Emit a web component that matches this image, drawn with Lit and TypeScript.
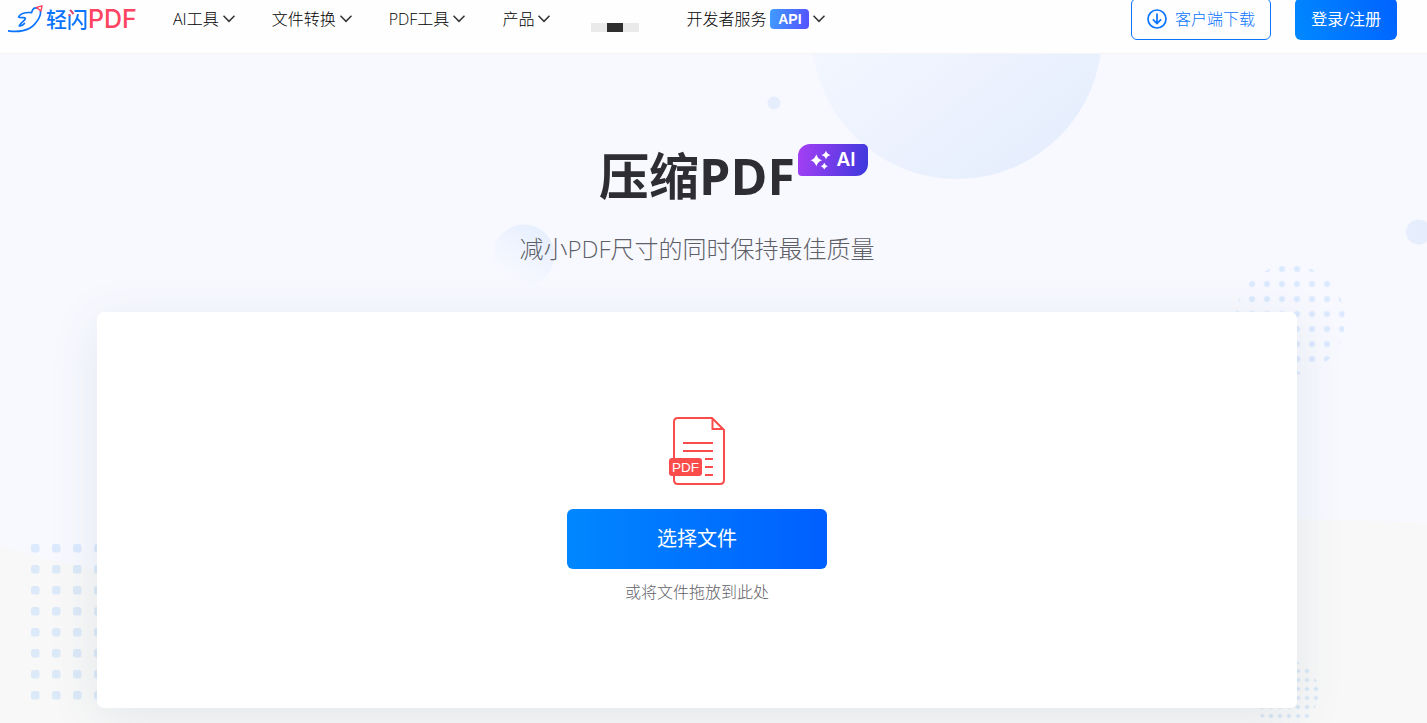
import { LitElement, html, css, svg } from "lit";
import { customElement } from "lit/decorators.js";

interface NavItem {
  label: string;
  badge?: string;
  placeholder?: boolean;
}

const NAV: NavItem[] = [
  { label: "AI工具" },
  { label: "文件转换" },
  { label: "PDF工具" },
  { label: "产品" },
  { label: "", placeholder: true },
  { label: "开发者服务", badge: "API" },
];

const chevron = html`<svg class="chevron" width="12" height="8" viewBox="0 0 12 8" aria-hidden="true">
  <path d="M0.5 0.8 L6 6.4 L11.5 0.8" fill="none" stroke="#333" stroke-width="1.5" />
</svg>`;

@customElement("page-backdrop")
export class PageBackdrop extends LitElement {
  static styles = css`
    :host {
      display: block;
      position: absolute;
      inset: 0;
      overflow: hidden;
    }
    .art {
      display: block;
      width: 100%;
      height: 100%;
    }
  `;

  render() {
    return html`<svg class="art" viewBox="0 0 1427 669" preserveAspectRatio="xMidYMin slice" aria-hidden="true">
      <defs>
        <linearGradient id="big" x1="0.2" y1="0.35" x2="0.7" y2="1">
          <stop offset="0" stop-color="#f4f7ff" />
          <stop offset="1" stop-color="#e6eefd" />
        </linearGradient>
        <linearGradient id="soft" x1="0.8" y1="0.2" x2="0.35" y2="0.9">
          <stop offset="0" stop-color="#e8f0fe" />
          <stop offset="1" stop-color="#f8f9ff" />
        </linearGradient>
        <pattern id="dots" x="1244.5" y="207.5" width="15" height="15" patternUnits="userSpaceOnUse">
          <circle cx="7.5" cy="7.5" r="3.1" fill="#dbe9fe" />
        </pattern>
        <pattern id="tiny" x="1257.5" y="612.5" width="9" height="9" patternUnits="userSpaceOnUse">
          <circle cx="4.5" cy="4.5" r="2.1" fill="#d7e5f8" />
        </pattern>
        <pattern id="squares" x="25" y="484" width="21" height="21" patternUnits="userSpaceOnUse">
          <rect x="6" y="6" width="8.5" height="8.5" rx="2.5" fill="#9cc8fb" fill-opacity="0.3" />
        </pattern>
      </defs>
      ${svg`
        <path d="M0 491 C150 540 330 548 560 520 C850 482 1130 454 1427 469 V669 H0 Z" fill="#f8f8f8" />
        <circle cx="957" cy="-20" r="145" fill="url(#big)" />
        <circle cx="774" cy="49" r="6.5" fill="#e6eefd" />
        <circle cx="1418.5" cy="178" r="12.5" fill="#e6eefd" />
        <circle cx="524" cy="201" r="30.5" fill="url(#soft)" />
        <circle cx="1290" cy="266" r="55" fill="url(#dots)" />
        <circle cx="1285" cy="639" r="33.5" fill="url(#tiny)" />
        <rect x="25" y="484" width="84" height="168" fill="url(#squares)" />
      `}
    </svg>`;
  }
}

@customElement("app-root")
export class AppRoot extends LitElement {
  static styles = css`
    :host {
      display: flex;
      flex-direction: column;
      min-height: 100vh;
      overflow: hidden;
      font-family: "Open Sans", "Noto Sans CJK SC", sans-serif;
      font-size: 16px;
      font-weight: 300;
      line-height: 24px;
      color: #000;
      background: #f8f9ff;
    }
    a {
      color: inherit;
      text-decoration: none;
    }
    button {
      font: inherit;
      cursor: pointer;
      margin: 0;
      border: 0;
      padding: 0;
    }
    .header {
      background: #fefefe;
      border-bottom: 1px solid #f4f4f6;
      padding: 0 30px 15px 8px;
    }
    .bar {
      display: flex;
      align-items: center;
      height: 38px;
    }
    .logo {
      display: flex;
      align-items: center;
      width: 129px;
      margin-right: 36px;
      color: #0a74ff;
      font-size: 21px;
      font-weight: 500;
      white-space: nowrap;
    }
    .bird {
      flex: none;
      margin-right: 2px;
    }
    .flash {
      color: transparent;
      background: linear-gradient(#ff4462, #ff4462) 0 0 / 7px 11px no-repeat, #0a74ff;
      -webkit-background-clip: text;
      background-clip: text;
    }
    .brand {
      font-family: Inter, sans-serif;
      font-size: 25px;
      font-weight: 500;
      color: #ff4462;
    }
    .nav {
      display: flex;
      align-items: center;
      gap: 37px;
      flex: 1;
    }
    .item {
      display: flex;
      align-items: center;
      gap: 4px;
      background: none;
      color: inherit;
      white-space: nowrap;
    }
    .chevron {
      flex: none;
    }
    .pixels {
      display: flex;
      padding: 16px 10px 0 4px;
    }
    .pixel {
      width: 16px;
      height: 9px;
      background: #eaeaea;
    }
    .pixel.dark {
      background: #2e2e2e;
    }
    .api {
      width: 39px;
      border-radius: 4px;
      background: linear-gradient(100deg, #3f9dff, #5450ff);
      color: #fff;
      font-family: "Liberation Sans", sans-serif;
      font-size: 14px;
      font-weight: 700;
      line-height: 20px;
      text-align: center;
    }
    .actions {
      display: flex;
      gap: 24px;
    }
    .download,
    .login {
      box-sizing: border-box;
      display: flex;
      align-items: center;
      justify-content: center;
      height: 42px;
      border-radius: 6px;
      white-space: nowrap;
    }
    .download {
      gap: 8px;
      padding: 0 15px;
      border: 1px solid #0a74ff;
      color: #0a74ff;
    }
    .login {
      padding: 0 16px;
      color: #fff;
      font-weight: 400;
      background: linear-gradient(70deg, #0089ff, #0062ff);
    }
    .main {
      position: relative;
      flex: 1;
      padding: 90px 33px 15px 0;
    }
    .content {
      position: relative;
      box-sizing: border-box;
      max-width: 1200px;
      margin: 0 auto;
      text-align: center;
    }
    .title {
      position: relative;
      display: inline-block;
      margin: 0;
      font-size: 50px;
      font-weight: 700;
      line-height: 64px;
      color: #2d2d33;
    }
    .ai {
      position: absolute;
      left: calc(100% + 3px);
      top: 0;
      display: flex;
      align-items: center;
      justify-content: center;
      gap: 5px;
      width: 70px;
      height: 32px;
      border-radius: 12px 5px 12px 4px;
      background: linear-gradient(100deg, #a640f5, #3c38dc);
      color: #fff;
      font-family: Inter, sans-serif;
      font-size: 19px;
      font-weight: 600;
      line-height: 32px;
    }
    .subtitle {
      margin: 25px 0 47px;
      font-size: 24px;
      line-height: 32px;
      color: #5f5f67;
    }
    .card {
      display: flex;
      flex-direction: column;
      align-items: center;
      padding: 105px 24px 104px;
      border-radius: 7px;
      background: #fff;
      box-shadow: 0 10px 50px rgba(40, 75, 100, 0.1);
    }
    .choose {
      width: 260px;
      height: 60px;
      margin: 24px 0 11px;
      border-radius: 6px;
      color: #fff;
      background: linear-gradient(90deg, #0087ff, #005fff);
      font-size: 20px;
      font-weight: 400;
    }
    .hint {
      margin: 0;
      color: #5f5f67;
    }
  `;

  private renderItem(item: NavItem) {
    if (item.placeholder) {
      return html`<span class="pixels"
        ><i class="pixel"></i><i class="pixel dark"></i><i class="pixel"></i
      ></span>`;
    }
    return html`<button class="item" type="button">
      <span>${item.label}</span>${item.badge ? html`<span class="api">${item.badge}</span>` : ""}${chevron}
    </button>`;
  }

  render() {
    return html`
      <header class="header">
        <div class="bar">
          <a class="logo" href="#">
            <svg class="bird" width="36" height="28" viewBox="0 0 36 28" fill="none" stroke-linecap="round" stroke-linejoin="round" aria-hidden="true">
              <path d="M0.3 25.8 C10 27.6 21 25.6 26.5 19.4 C30.5 15 33.2 10 32.4 6" stroke="#0a74ff" stroke-width="1.7" />
              <path d="M29 3 C25.8 2.2 24.4 4.4 23.6 7.6 C18 7.2 12.6 7.8 10.6 12 C13 13.4 17 11.8 17.4 13.4 C17 16 13.2 17 11.2 20.8 C13.4 21.2 15 20.2 16.4 18.4" stroke="#0a74ff" stroke-width="1.7" />
              <path d="M28.4 2.4 L34 0.8 L33 6 Z" stroke="#ff4462" stroke-width="1.4" />
            </svg>
            <span>轻<span class="flash">闪</span></span><span class="brand">PDF</span>
          </a>
          <nav class="nav">${NAV.map((item) => this.renderItem(item))}</nav>
          <div class="actions">
            <a class="download" href="#">
              <svg width="20" height="20" viewBox="0 0 20 20" fill="none" stroke="#0a74ff" stroke-width="1.7" aria-hidden="true">
                <circle cx="10" cy="10" r="9" />
                <path d="M10 4.6 V14.2 M5.9 10.4 L10 14.5 L14.1 10.4" />
              </svg>
              客户端下载
            </a>
            <a class="login" href="#">登录/注册</a>
          </div>
        </div>
      </header>
      <main class="main">
        <page-backdrop></page-backdrop>
        <section class="content">
          <h1 class="title">
            压缩PDF<span class="ai"
              ><svg width="21" height="20" viewBox="0 0 21 20" fill="#fff" aria-hidden="true">
                <path d="M6.3 4.2 Q7.6 9 12.2 10.2 Q7.6 11.5 6.3 16.3 Q5 11.5 0.4 10.2 Q5 9 6.3 4.2 Z" />
                <path d="M16 0.4 Q17 4 20.6 5 Q17 6 16 9.4 Q15 6 11.4 5 Q15 4 16 0.4 Z" />
                <path d="M14.3 12.8 Q15.2 15.4 17.8 16.2 Q15.2 17 14.3 19.6 Q13.4 17 10.8 16.2 Q13.4 15.4 14.3 12.8 Z" />
              </svg>AI</span
            >
          </h1>
          <p class="subtitle">减小PDF尺寸的同时保持最佳质量</p>
          <div class="card">
            <svg width="56" height="68" viewBox="0 0 56 68" role="img" aria-label="PDF">
              <path d="M43 1 H9 Q5 1 5 5 V63 Q5 67 9 67 H51 Q55 67 55 63 V13 Z" fill="none" stroke="#f94c4b" stroke-width="2" stroke-linejoin="round" />
              <path d="M43.5 2 V12 H54" fill="none" stroke="#f94c4b" stroke-width="2" />
              <path d="M14 26 H44 M14 34 H44 M36 42 H44 M36 50 H44 M36 58 H44" stroke="#f94c4b" stroke-width="2" />
              <rect x="0" y="41" width="33" height="18" rx="3" fill="#f94c4b" />
              <text x="16.5" y="55" text-anchor="middle" font-family="Liberation Sans, sans-serif" font-size="13.5" font-weight="400" fill="#fff">PDF</text>
            </svg>
            <button class="choose" type="button">选择文件</button>
            <p class="hint">或将文件拖放到此处</p>
          </div>
        </section>
      </main>
    `;
  }
}
